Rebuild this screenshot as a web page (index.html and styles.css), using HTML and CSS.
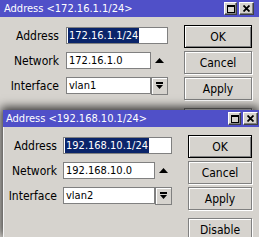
FILE: index.html
```html
<!DOCTYPE html>
<html>
<head>
<meta charset="utf-8">
<link rel="stylesheet" href="styles.css">
</head>
<body>
<div class="win w1">
  <div class="title">
    <span class="title-text">Address &lt;172.16.1.1/24&gt;</span>
    <div class="tbtns">
      <span class="tb max"><span class="maxbox"></span></span>
      <span class="tb close"><svg width="7" height="7" viewBox="0 0 7 7"><path d="M0.5 0.5L6.5 6.5M6.5 0.5L0.5 6.5" stroke="#000" stroke-width="1.8"/></svg></span>
    </div>
  </div>
  <div class="body">
    <div class="form">
      <div class="row"><span class="lbl">Address</span><div class="field addr"><span class="sel">172.16.1.1/24</span></div></div>
      <div class="row"><span class="lbl">Network</span><div class="field short">172.16.1.0</div><span class="slot"><svg width="9" height="5" viewBox="0 0 9 5"><polygon points="0,5 9,5 4.5,0" fill="#000"/></svg></span></div>
      <div class="row"><span class="lbl">Interface</span><div class="field short">vlan1</div><span class="dd"><svg width="7" height="7" viewBox="0 0 7 7"><rect x="0" y="0" width="7" height="2" fill="#000"/><polygon points="0,3 7,3 3.5,7" fill="#000"/></svg></span></div>
    </div>
    <div class="btns">
      <button class="btn def">OK</button>
      <button class="btn">Cancel</button>
      <button class="btn">Apply</button>
      <button class="btn dis" aria-label="Disable"></button>
    </div>
  </div>
</div>
<div class="win w2">
  <div class="title">
    <span class="title-text">Address &lt;192.168.10.1/24&gt;</span>
    <div class="tbtns">
      <span class="tb max"><span class="maxbox"></span></span>
      <span class="tb close"><svg width="7" height="7" viewBox="0 0 7 7"><path d="M0.5 0.5L6.5 6.5M6.5 0.5L0.5 6.5" stroke="#000" stroke-width="1.8"/></svg></span>
    </div>
  </div>
  <div class="body">
    <div class="form">
      <div class="row"><span class="lbl">Address</span><div class="field addr"><span class="sel">192.168.10.1/24</span></div></div>
      <div class="row"><span class="lbl">Network</span><div class="field short">192.168.10.0</div><span class="slot"><svg width="9" height="5" viewBox="0 0 9 5"><polygon points="0,5 9,5 4.5,0" fill="#000"/></svg></span></div>
      <div class="row"><span class="lbl">Interface</span><div class="field short">vlan2</div><span class="dd"><svg width="7" height="7" viewBox="0 0 7 7"><rect x="0" y="0" width="7" height="2" fill="#000"/><polygon points="0,3 7,3 3.5,7" fill="#000"/></svg></span></div>
    </div>
    <div class="btns">
      <button class="btn def">OK</button>
      <button class="btn">Cancel</button>
      <button class="btn">Apply</button>
      <button class="btn dis">Disable</button>
    </div>
  </div>
</div>
</body>
</html>
```
FILE: styles.css
```css
html, body {
  margin: 0;
  padding: 0;
}
body {
  width: 259px;
  height: 237px;
  overflow: hidden;
  position: relative;
  background: #d6d3ce;
  font-family: "DejaVu Sans Condensed", "DejaVu Sans", sans-serif;
  font-stretch: condensed;
  color: #000;
}
.win {
  position: absolute;
  background: #d6d3ce;
  overflow: hidden;
}
.w1 {
  left: 0;
  top: 0;
  width: 259px;
  height: 110px;
}
.w2 {
  left: 3px;
  top: 110px;
  width: 256px;
  height: 127px;
  box-shadow: -1px -2px 9px 1px rgba(0, 0, 0, 0.75);
}
.title {
  height: 17px;
  background: #5050c8;
  color: #fff;
  display: flex;
  align-items: center;
  font-size: 11px;
  padding-left: 4px;
}
.w2 .title {
  padding-left: 3px;
}
.title-text {
  flex: 1;
  line-height: 17px;
  white-space: nowrap;
}
.tbtns {
  display: flex;
  gap: 2px;
  margin-right: 5px;
}
.w2 .tbtns {
  margin-right: 1px;
}
.tb {
  width: 13px;
  height: 13px;
  box-sizing: border-box;
  background: #d6d3ce;
  border: 1px solid;
  border-color: #fff #404040 #404040 #fff;
  box-shadow: inset -1px -1px 0 #808080;
  display: flex;
  align-items: center;
  justify-content: center;
}
.tb.close {
  width: 15px;
}
.maxbox {
  width: 8px;
  height: 8px;
  box-sizing: border-box;
  border: 1px solid #000;
  border-top-width: 2px;
}
.body {
  display: flex;
  align-items: flex-start;
}
.w2 .body {
  box-shadow: inset 1px 0 0 #f4f4f4;
  height: 110px;
}
.form {
  margin-top: 10px;
  display: flex;
  flex-direction: column;
  gap: 8px;
}
.row {
  display: flex;
  align-items: center;
  height: 17px;
}
.lbl {
  width: 59px;
  margin-right: 7px;
  text-align: right;
  font-size: 12px;
  line-height: 17px;
  padding-top: 1px;
}
.w2 .lbl {
  width: 54px;
  margin-right: 6px;
}
.field {
  height: 17px;
  box-sizing: border-box;
  background: #fff;
  border: 1px solid #808080;
  font-size: 11px;
  line-height: 15px;
  padding-left: 2px;
  white-space: nowrap;
  overflow: hidden;
}
.field.addr {
  width: 102px;
  padding-left: 1px;
}
.w2 .field.addr {
  width: 109px;
}
.field.short {
  width: 85px;
}
.w2 .field.short {
  width: 92px;
}
.sel {
  display: inline-block;
  background: #0a246a;
  color: #fff;
  padding: 0 1px;
  line-height: 15px;
}
.slot {
  width: 17px;
  height: 17px;
  display: flex;
  align-items: center;
  justify-content: center;
}
.slot svg {
  margin-top: -1px;
}
.dd {
  width: 17px;
  height: 18px;
  box-sizing: border-box;
  border: 1px solid #808080;
  box-shadow: inset 1px 1px 0 #fff;
  display: flex;
  align-items: center;
  justify-content: center;
}
.btns {
  margin-top: 8px;
  margin-left: 16px;
  display: flex;
  flex-direction: column;
  gap: 3px;
}
.btn {
  width: 68px;
  height: 23px;
  box-sizing: border-box;
  margin: 0;
  padding: 0;
  background: #d6d3ce;
  border: 1px solid #808080;
  box-shadow: inset 1px 1px 0 #fff, 1px 1px 0 #fff;
  font-family: inherit;
  font-stretch: condensed;
  font-size: 12px;
  color: #000;
}
.w2 .btn {
  width: 64px;
}
.btn.def {
  border-color: #000;
  box-shadow: inset 1px 1px 0 #fff, inset -1px -1px 0 #808080;
}
.btn.dis {
  margin-top: 5px;
}
```
